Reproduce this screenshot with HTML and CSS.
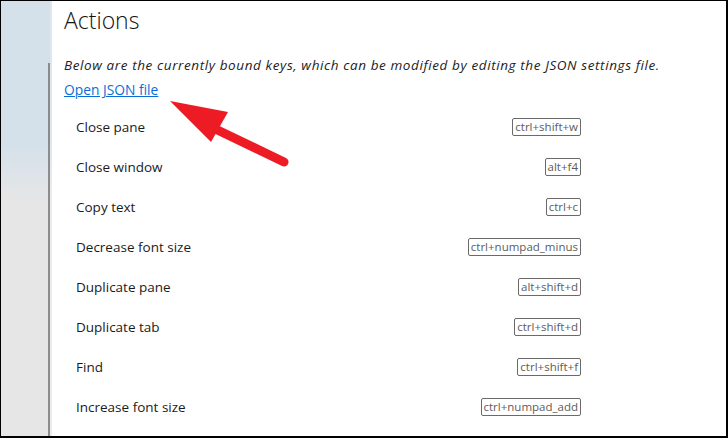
FILE: index.html
```html
<!DOCTYPE html>
<html>
<head>
<meta charset="utf-8">
<link rel="stylesheet" href="styles.css">
</head>
<body>
<div class="frame">
  <div class="sidebar">
    <div class="side-fill"></div>
    <div class="scroll-thumb"></div>
    <div class="side-edge"></div>
  </div>
  <div class="main">
    <h1 class="title">Actions</h1>
    <p class="desc">Below are the currently bound keys, which can be modified by editing the JSON settings file.</p>
    <a class="link" href="#">Open JSON file</a>
    <ul class="rows">
      <li class="row"><span class="name">Close pane</span><span class="key">ctrl+shift+w</span></li>
      <li class="row"><span class="name">Close window</span><span class="key">alt+f4</span></li>
      <li class="row"><span class="name">Copy text</span><span class="key">ctrl+c</span></li>
      <li class="row"><span class="name">Decrease font size</span><span class="key">ctrl+numpad_minus</span></li>
      <li class="row"><span class="name">Duplicate pane</span><span class="key">alt+shift+d</span></li>
      <li class="row"><span class="name">Duplicate tab</span><span class="key">ctrl+shift+d</span></li>
      <li class="row"><span class="name">Find</span><span class="key">ctrl+shift+f</span></li>
      <li class="row"><span class="name">Increase font size</span><span class="key">ctrl+numpad_add</span></li>
    </ul>
  </div>
  <svg class="arrow" width="728" height="438" viewBox="0 0 728 438">
    <line x1="205" y1="124" x2="284" y2="162" stroke="#ed1c24" stroke-width="9" stroke-linecap="round"/>
    <polygon points="170,101 228,112 211,142" fill="#ed1c24"/>
  </svg>
</div>
</body>
</html>
```
FILE: styles.css
```css
* { box-sizing: border-box; }
html, body { margin: 0; padding: 0; background: #fff; }
body { font-family: "Open Sans", "Noto Sans", sans-serif; color: #1b1b1b; }

.frame {
  position: relative;
  width: 728px;
  height: 438px;
  border-top: 1px solid #000;
  border-left: 1px solid #000;
  border-right: 2px solid #000;
  border-bottom: 2px solid #000;
  display: flex;
  overflow: hidden;
}

.sidebar {
  width: 51px;
  flex: none;
  display: flex;
  background: linear-gradient(to bottom, #d5e1ea 0, #d5e1ea 145px, #e6e6e6 200px, #e6e6e6 100%);
}
.side-fill { flex: 1; }
.scroll-thumb {
  width: 2px;
  margin-top: 62px;
  background: #8c8c8c;
}
.side-edge {
  width: 2px;
  background: linear-gradient(to bottom, #dfe7ee 0, #dfe7ee 145px, #ececec 200px);
}

.main {
  flex: 1;
  padding-left: 12px;
}

.title {
  margin: 3px 0 0 0;
  font-size: 23px;
  font-weight: 300;
  line-height: 32px;
  color: #111;
}

.desc {
  margin: 19px 0 0 0;
  font-size: 13.5px;
  letter-spacing: 0.6px;
  font-style: italic;
  line-height: 20px;
  color: #222;
}

.link {
  display: block;
  margin-top: 5px;
  font-size: 13.8px;
  line-height: 20px;
  color: #0a6fd4;
  text-decoration: underline;
  width: max-content;
}

.rows {
  list-style: none;
  margin: 7px 0 0 0;
  padding: 0;
  width: 517px;
}
.row {
  height: 40px;
  display: flex;
  align-items: center;
  justify-content: space-between;
  padding-left: 12px;
}
.name {
  font-size: 13.5px;
  color: #1b1b1b;
}
.key {
  font-size: 11.5px;
  line-height: 16px;
  color: #5c5c5c;
  border: 1px solid #6a6a6a;
  border-radius: 2px;
  padding: 0 2px;
}

.arrow {
  position: absolute;
  left: -1px;
  top: -1px;
  pointer-events: none;
}
```
